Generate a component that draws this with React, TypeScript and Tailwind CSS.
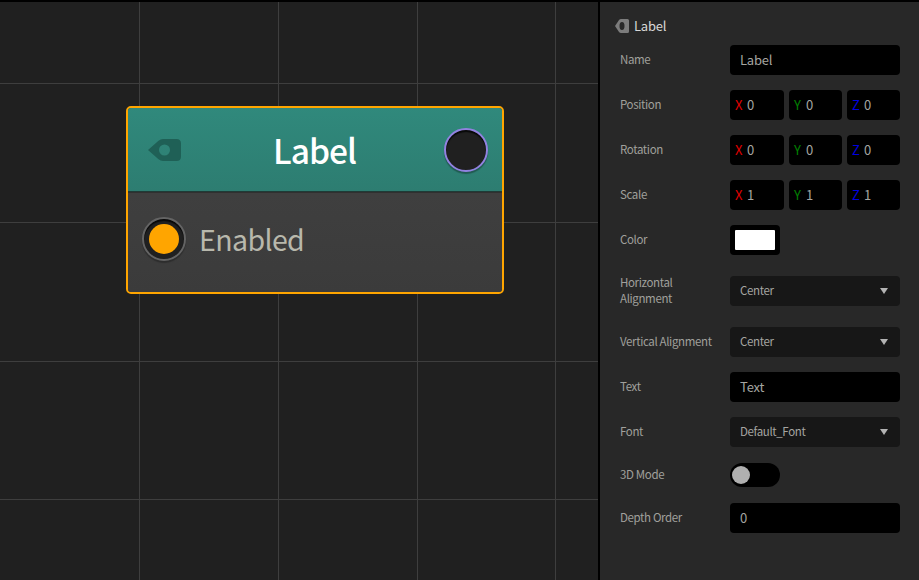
import React, { FC, ReactNode } from "react";

interface RowProps {
  label: string;
  height?: string;
  children: ReactNode;
}

const Row: FC<RowProps> = ({ label, height = "h-[30px]", children }) => (
  <div className={`flex items-center ${height}`}>
    <div className="w-[110px] shrink-0 pr-3 pb-[2px] text-[11.5px] leading-4 tracking-[-0.36px] text-[#a0a09c]">{label}</div>
    <div className="flex w-[170px] items-center">{children}</div>
  </div>
);

const TextField: FC<{ value: string }> = ({ value }) => (
  <div className="flex h-[30px] w-full items-center rounded-[4px] bg-black px-[10px] text-[13px] leading-4 tracking-[-0.2px] text-[#a5a5a1]">
    {value}
  </div>
);

const SelectField: FC<{ value: string }> = ({ value }) => (
  <div className="flex h-[30px] w-full items-center justify-between rounded-[4px] bg-[#171717] pr-3 pl-[10px] text-[11.5px] leading-4 tracking-[-0.36px] text-[#a5a5a1]">
    <span className="pb-[2px]">{value}</span>
    <svg width="8" height="6" viewBox="0 0 8 6">
      <path d="M0 0H8L4 6Z" fill="#b3b3b3" />
    </svg>
  </div>
);

const axes = [
  { name: "X", color: "text-[#e00000]" },
  { name: "Y", color: "text-[#008000]" },
  { name: "Z", color: "text-[#0000e0]" },
];

const VectorField: FC<{ value: string }> = ({ value }) => (
  <div className="grid w-full grid-cols-[54px_53px_53px] gap-[5px]">
    {axes.map((axis) => (
      <div key={axis.name} className="flex h-[30px] items-center rounded-[4px] bg-black pl-[5px] text-[13px] leading-4">
        <span className={`w-[12px] ${axis.color}`}>{axis.name}</span>
        <span className="text-[#a5a5a1]">{value}</span>
      </div>
    ))}
  </div>
);

const Canvas: FC = () => (
  <div className="relative h-full w-[598px] shrink-0 overflow-hidden bg-[#202020]">
    <svg className="absolute inset-0" width="598" height="578" shapeRendering="crispEdges">
      <path
        d="M139.5 0V578M278.5 0V578M417.5 0V578M555.5 0V578M0 81.5H598M0 220.5H598M0 359.5H598M0 497.5H598"
        stroke="#3e3e3e"
      />
    </svg>

    {/* Label node */}
    <div className="absolute top-[104px] left-[126px] flex h-[188px] w-[378px] flex-col overflow-hidden rounded-[5px] border-2 border-[#ffa500] bg-[#3e3e3e]">
      <div className="flex h-[84px] items-center border-b border-[#1f3b36] bg-linear-to-b from-[#30897c] to-[#2d7d71] pt-px pr-[14px] pl-[20px]">
        <svg width="33" height="22" viewBox="0 0 33 22">
          <path
            fillRule="evenodd"
            d="M0 11L10.5 1.8Q12.5 0 15 0H28.5Q33 0 33 4.5V17.5Q33 22 28.5 22H15Q12.5 22 10.5 20.2ZM22 11A5.5 5.5 0 1 0 11 11A5.5 5.5 0 1 0 22 11Z"
            fill="#1f6056"
          />
        </svg>
        <div className="flex-1 pl-[4px] text-center text-[33.5px] leading-[44px] font-medium tracking-[-1px] text-white">Label</div>
        <div className="h-[44px] w-[44px] rounded-full border-2 border-[#9182e0] bg-[#202020] shadow-[0_2px_1px_rgba(0,0,0,0.3),inset_0_2px_1px_#080808]" />
      </div>
      <div className="flex flex-1 items-start border-t border-[#303030] bg-linear-to-b from-[#3f3f3f] to-[#3b3b3b] pt-[24px] pl-[14px]">
        <div className="flex h-[44px] w-[44px] shrink-0 items-center justify-center rounded-full border-2 border-[#646464] bg-[#202020] shadow-[0_2px_1px_rgba(0,0,0,0.25),inset_0_2px_1px_#080808]">
          <div className="h-[30px] w-[30px] rounded-full bg-[#ffa500]" />
        </div>
        <div className="ml-[13px] text-[28.5px] leading-[44px] tracking-[-0.6px] text-[#b8b8ac]">Enabled</div>
      </div>
    </div>
  </div>
);

const App: FC = () => {
  return (
    <div className="flex h-[580px] w-[919px] overflow-hidden border-t-2 border-black bg-[#282828] font-['Noto_Sans_CJK_SC','Noto_Sans',sans-serif]">
      <Canvas />
      <div className="flex-1 border-l-2 border-black pt-[15px]">
        <div className="flex h-[18px] items-center pl-[15px]">
          <svg width="14" height="14" viewBox="0 0 14 14">
            <path
              fillRule="evenodd"
              d="M0 7L4 1Q4.8 0 6 0H12.5Q14 0 14 1.5V12.5Q14 14 12.5 14H6Q4.8 14 4 13ZM9.5 7A2.5 4 0 1 0 4.5 7A2.5 4 0 1 0 9.5 7Z"
              fill="#7c7c7c"
            />
          </svg>
          <div className="ml-[5px] text-[13px] leading-4 tracking-[-0.2px] text-[#d8d8d8]">Label</div>
        </div>
        <div className="mt-[10px] flex flex-col gap-[15px] pl-[20px]">
          <Row label="Name"><TextField value="Label" /></Row>
          <Row label="Position"><VectorField value="0" /></Row>
          <Row label="Rotation"><VectorField value="0" /></Row>
          <Row label="Scale"><VectorField value="1" /></Row>
          <Row label="Color">
            <div className="h-[30px] w-[50px] rounded-[4px] bg-black p-[5px]">
              <div className="h-full w-full rounded-[1px] bg-white" />
            </div>
          </Row>
          <Row label="Horizontal Alignment" height="h-[42px]"><SelectField value="Center" /></Row>
          <Row label="Vertical Alignment"><SelectField value="Center" /></Row>
          <Row label="Text"><TextField value="Text" /></Row>
          <Row label="Font"><SelectField value="Default_Font" /></Row>
          <Row label="3D Mode" height="h-[26px]">
            <div className="flex h-[24px] w-[50px] items-center rounded-full bg-black pl-[2px]">
              <div className="h-[18px] w-[18px] rounded-full bg-[#b0b0b0]" />
            </div>
          </Row>
          <Row label="Depth Order"><TextField value="0" /></Row>
        </div>
      </div>
    </div>
  );
};

export default App;
